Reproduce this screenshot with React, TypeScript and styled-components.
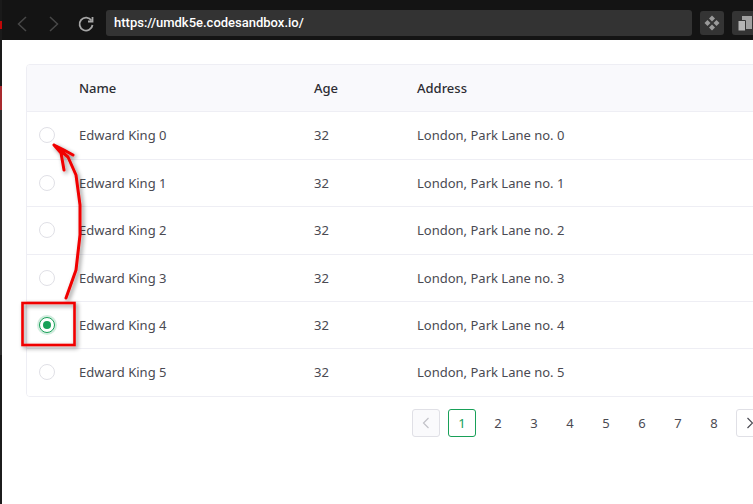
import React from 'react';
import styled, { createGlobalStyle } from 'styled-components';

const GlobalStyle = createGlobalStyle`
  html, body {
    margin: 0;
    padding: 0;
    background: #fff;
    overflow: hidden;
  }
`;

const Screen = styled.div`
  position: relative;
  width: 753px;
  height: 504px;
  overflow: hidden;
  display: flex;
  font-family: 'Noto Sans', sans-serif;
`;

const WindowEdge = styled.div`
  flex: 0 0 2px;
  background: linear-gradient(
    to bottom,
    #1a1a1a 0,
    #1a1a1a 21px,
    #c00808 21px,
    #c00808 29px,
    #1a1a1a 29px,
    #1a1a1a 86px,
    #a82a2e 86px,
    #a82a2e 110px,
    #2e2e2e 110px,
    #2e2e2e 355px,
    #1c1c1c 355px
  );
`;

const Browser = styled.div`
  flex: 0 0 751px;
  min-width: 0;
  display: flex;
  flex-direction: column;
`;

const TopBar = styled.div`
  height: 40px;
  flex: none;
  box-sizing: border-box;
  padding-top: 10px;
  background: #141414;
  display: flex;
  align-items: flex-start;
`;

const NavIcon = styled.svg<{ $dim?: boolean }>`
  flex: none;
  width: 20px;
  height: 20px;
  margin-right: 12px;
  fill: none;
  stroke: ${(p) => (p.$dim ? '#484848' : '#a6a6a6')};
  stroke-width: ${(p) => (p.$dim ? 1.5 : 1.8)};
`;

const NavGroup = styled.div`
  display: flex;
  padding: 4px 0 0 10px;
  width: 104px;
  box-sizing: border-box;
  flex: none;
`;

const AddressBar = styled.div`
  flex: none;
  width: 586px;
  height: 26px;
  box-sizing: border-box;
  padding-left: 8px;
  border-radius: 3px;
  background: #333333;
  color: #ffffff;
  font: 500 13px/25px Roboto, sans-serif;
`;

const ExtensionButton = styled.div`
  flex: none;
  width: 24px;
  height: 24px;
  margin: 1px 0 0 8px;
  border-radius: 3px;
  background: #343434;
  display: flex;
  align-items: center;
  justify-content: center;
`;

const Content = styled.div`
  padding: 24px 0 0 24px;
  width: 900px;
  box-sizing: border-box;
`;

const Table = styled.div`
  width: 860px;
  box-sizing: border-box;
  border: 1px solid #eeeef4;
  border-radius: 4px;
  overflow: hidden;
`;

const Row = styled.div<{ $head?: boolean; $height: number; $last?: boolean; $lift?: boolean }>`
  display: grid;
  grid-template-columns: 52px 235px 103px 1fr;
  align-items: center;
  height: ${(p) => p.$height}px;
  box-sizing: border-box;
  padding-bottom: ${(p) => (p.$lift ? 1 : 0)}px;
  background: ${(p) => (p.$head ? '#f9f9fc' : '#ffffff')};
  border-bottom: ${(p) => (p.$last ? 'none' : '1px solid #eeeef4')};
  color: ${(p) => (p.$head ? '#2d2d33' : '#4a4a52')};
  font-size: 13px;
  font-weight: ${(p) => (p.$head ? 500 : 400)};
`;

const Radio = styled.span<{ $checked?: boolean }>`
  justify-self: start;
  margin-left: 12px;
  width: 16px;
  height: 16px;
  box-sizing: border-box;
  border-radius: 50%;
  background: #fff;
  border: 1px solid ${(p) => (p.$checked ? '#18a058' : '#e0e0e6')};
  box-shadow: ${(p) => (p.$checked ? '0 0 0 2px rgba(24, 160, 88, 0.2)' : 'none')};
  display: flex;
  align-items: center;
  justify-content: center;
  &::after {
    content: '';
    display: ${(p) => (p.$checked ? 'block' : 'none')};
    width: 8px;
    height: 8px;
    border-radius: 50%;
    background: #18a058;
  }
`;

const Pagination = styled.div`
  display: flex;
  margin: 12px 0 0 386px;
  gap: 8px;
`;

const PageItem = styled.div<{ $active?: boolean; $bordered?: boolean; $disabled?: boolean }>`
  flex: none;
  width: 28px;
  height: 28px;
  box-sizing: border-box;
  border-radius: 3px;
  border: 1px solid
    ${(p) => (p.$active ? '#18a058' : p.$bordered ? '#e0e0e6' : 'transparent')};
  background: ${(p) => (p.$disabled ? '#fafafc' : '#fff')};
  color: ${(p) => (p.$active ? '#18a058' : '#4a4a52')};
  font-size: 13px;
  display: flex;
  align-items: center;
  justify-content: center;
`;

const Annotation = styled.svg`
  position: absolute;
  left: 0;
  top: 0;
  pointer-events: none;
`;

const people = [0, 1, 2, 3, 4, 5];
const rowHeights = [48, 47, 48, 47, 47, 47];
const liftedRows = [0, 2, 5];
const pages = [1, 2, 3, 4, 5, 6, 7, 8];

const App = () => (
  <>
    <GlobalStyle />
    <Screen>
      <WindowEdge />
      <Browser>
        <TopBar>
          <NavGroup>
            <NavIcon $dim viewBox="0 0 20 20">
              <path d="M14 3 6.500 10l7.500 7" />
            </NavIcon>
            <NavIcon $dim viewBox="0 0 20 20">
              <path d="M6 3 13.500 10 6 17" />
            </NavIcon>
            <NavIcon viewBox="0 0 20 20">
              <path d="M15.500 6.500A6.500 6.500 0 1 0 16.500 11" />
              <path d="M16.500 3v4.500H12" />
            </NavIcon>
          </NavGroup>
          <AddressBar>https://umdk5e.codesandbox.io/</AddressBar>
          <ExtensionButton>
            <svg width="18" height="18" viewBox="0 0 18 18" fill="#9a9a9a">
              <path d="M9 1.500 12 4.500 9 7.500 6 4.500Z" />
              <path d="M4.500 6 7.500 9 4.500 12 1.500 9Z" />
              <path d="M13.500 6 16.500 9 13.500 12 10.500 9Z" />
              <path d="M9 10.500 12 13.500 9 16.500 6 13.500Z" />
            </svg>
          </ExtensionButton>
          <ExtensionButton>
            <svg width="24" height="24" viewBox="0 0 24 24">
              <path d="M10 5h10v13H10Z" fill="#a0a0a0" />
              <path d="M6 9.500h7.500V20H6Z" fill="#b4b4b4" stroke="#343434" />
            </svg>
          </ExtensionButton>
        </TopBar>
        <Content>
          <Table>
            <Row $head $height={47}>
              <span />
              <span>Name</span>
              <span>Age</span>
              <span>Address</span>
            </Row>
            {people.map((n, i) => (
              <Row
                key={n}
                $height={rowHeights[i]}
                $last={i === people.length - 1}
                $lift={liftedRows.includes(n)}
              >
                <Radio $checked={n === 4} />
                <span>Edward King {n}</span>
                <span>32</span>
                <span>London, Park Lane no. {n}</span>
              </Row>
            ))}
          </Table>
          <Pagination>
            <PageItem $bordered $disabled>
              <svg width="14" height="14" viewBox="0 0 14 14" fill="none" stroke="#c2c2c8" strokeWidth="1.2">
                <path d="M9.500 2 4.500 7l5 5" />
              </svg>
            </PageItem>
            {pages.map((p) => (
              <PageItem key={p} $active={p === 1}>
                {p}
              </PageItem>
            ))}
            <PageItem $bordered>
              <svg width="14" height="14" viewBox="0 0 14 14" fill="none" stroke="#4a4a52" strokeWidth="1.2">
                <path d="M4.500 2l5 5-5 5" />
              </svg>
            </PageItem>
          </Pagination>
        </Content>
      </Browser>
      <Annotation width="753" height="504" viewBox="0 0 753 504">
        <defs>
          <filter id="markShadow" x="-30%" y="-30%" width="160%" height="160%">
            <feDropShadow dx="2" dy="2" stdDeviation="2" floodColor="#000" floodOpacity="0.45" />
          </filter>
        </defs>
        <g filter="url(#markShadow)" fill="none" stroke="#f00000" strokeLinecap="round" strokeLinejoin="round">
          <path
            d="M66 298 76 270 80 235 80 205 76 175 68 157 54 145 64 150 73 155 M54 145 61 153 64 170"
            strokeWidth="3"
          />
          <rect x="22.500" y="303" width="52" height="42" strokeWidth="2.600" strokeLinejoin="miter" />
        </g>
      </Annotation>
    </Screen>
  </>
);

export default App;
